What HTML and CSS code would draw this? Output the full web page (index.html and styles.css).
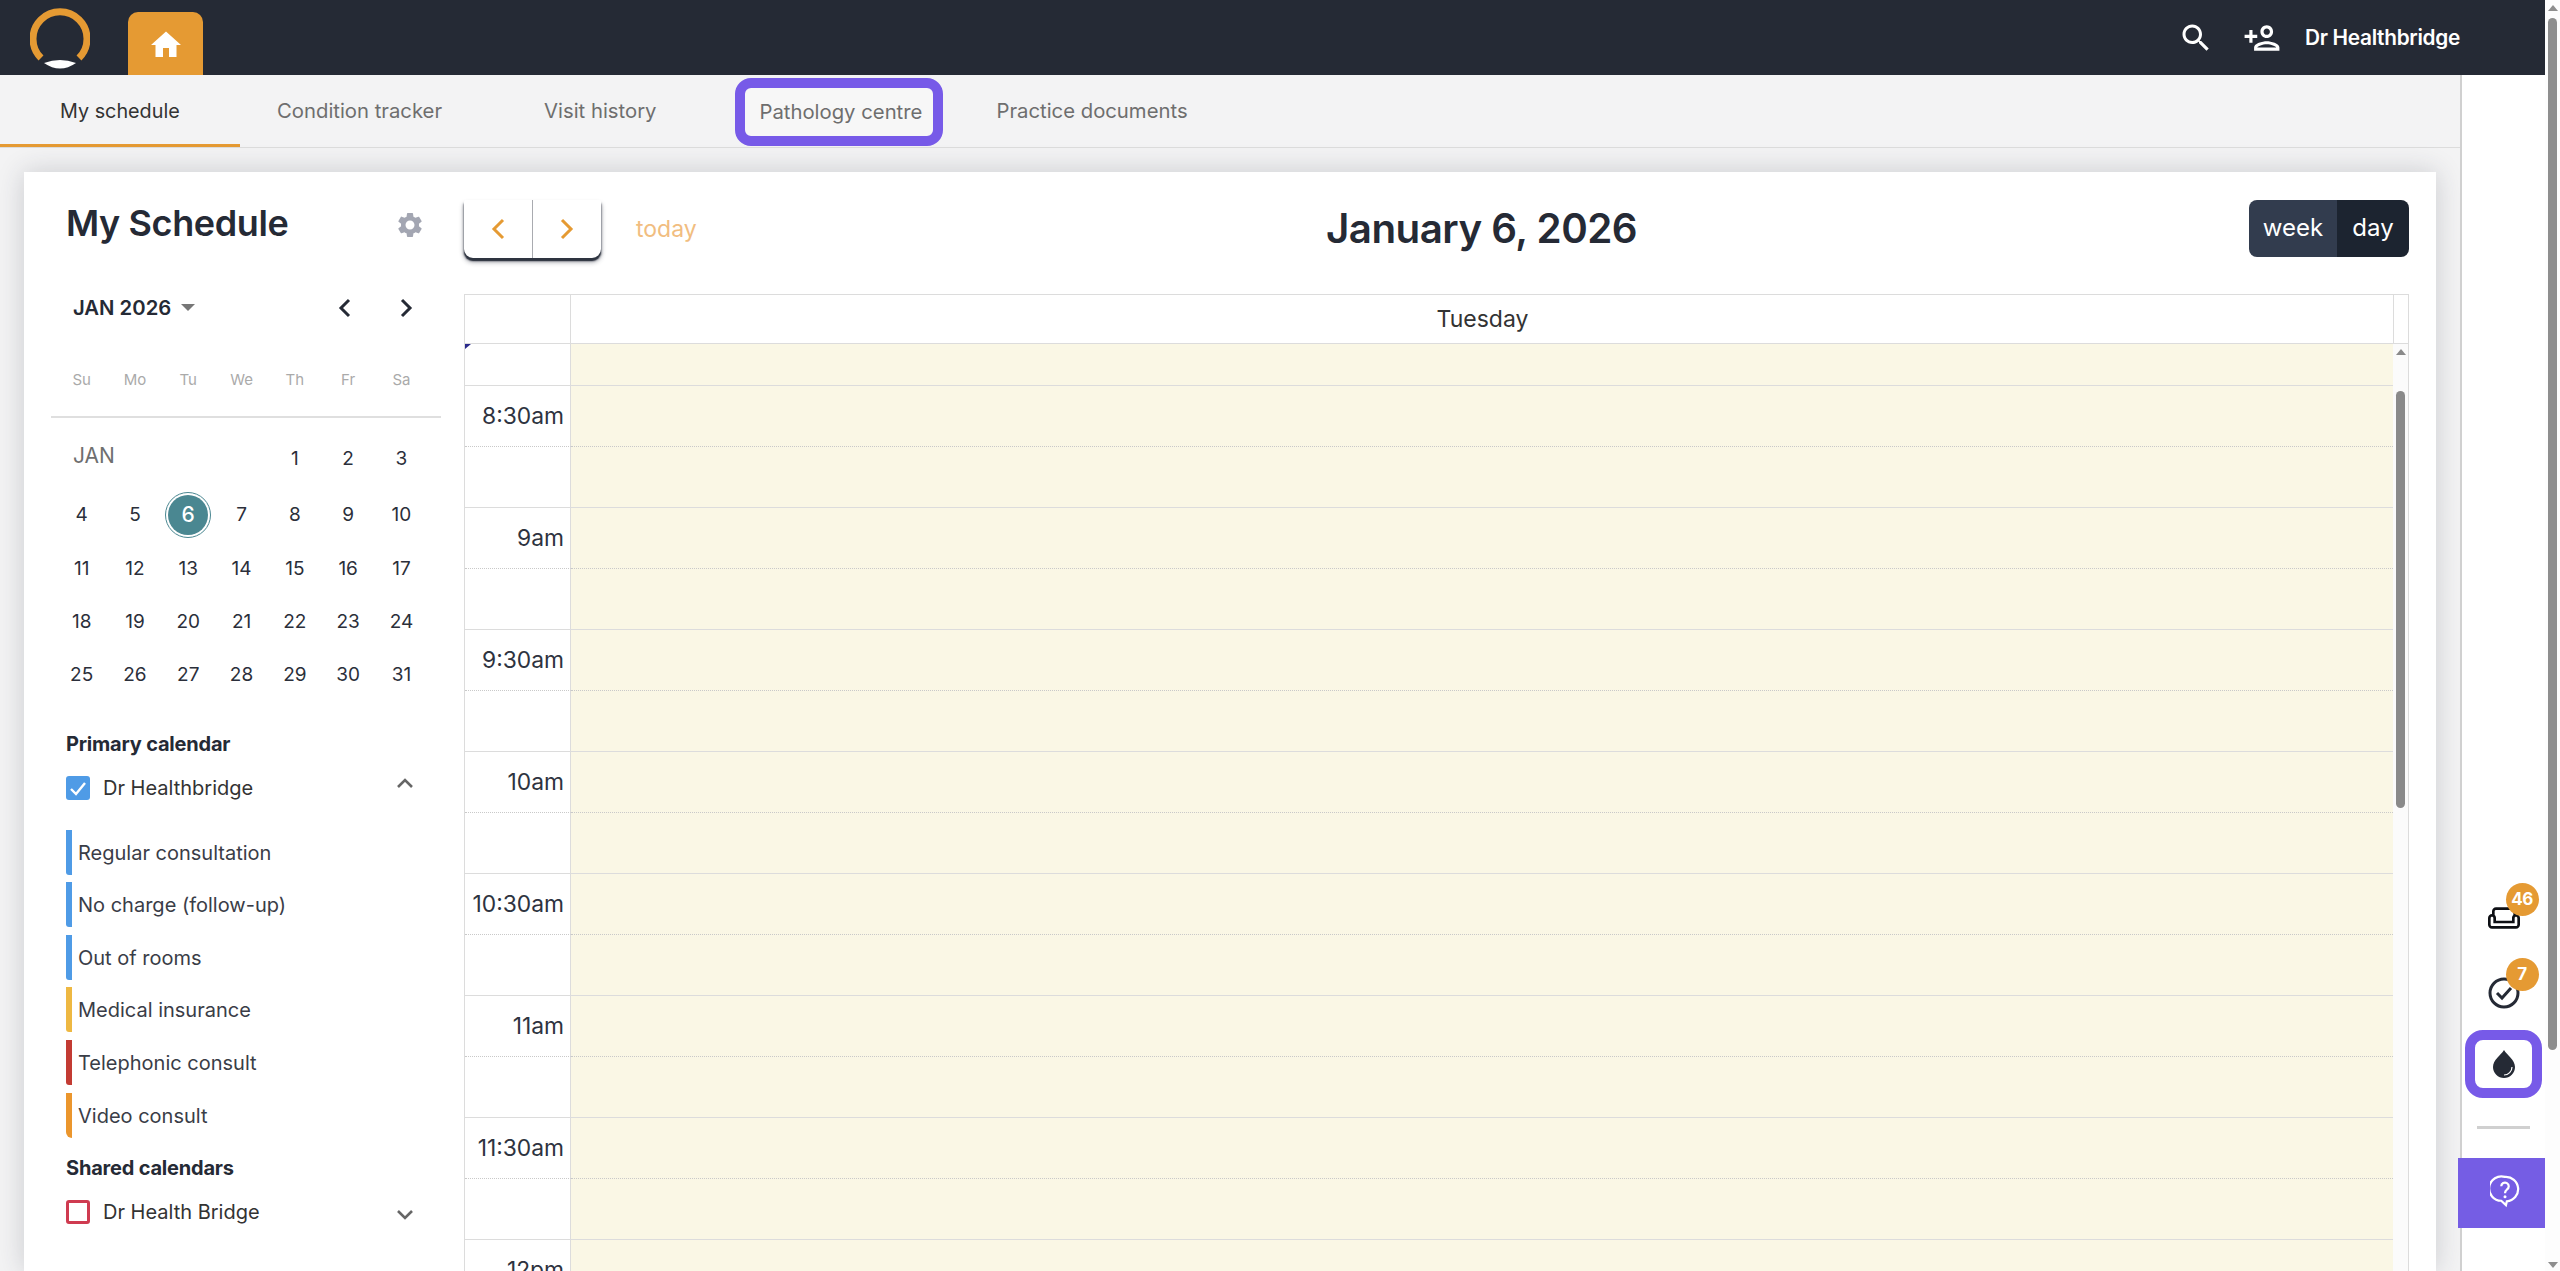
FILE: index.html
```html
<!DOCTYPE html>
<html lang="en">
<head>
<meta charset="utf-8">
<title>My Schedule</title>
<link rel="stylesheet" href="styles.css">
</head>
<body>
<div class="app">
  <div class="window">
    <header class="topbar">
      <div class="brand">
        <svg class="logo" viewBox="0 0 60 62"><path d="M11 51 A27 27 0 1 1 49 51" transform="translate(0 -1)" fill="none" stroke="#e59a33" stroke-width="7"/><path d="M14 55 Q30 49 46 55 Q30 66 14 55Z" fill="#fff"/></svg>
        <a class="home-tab"><svg viewBox="0 0 24 24" class="home-icon"><path d="M10 20v-6h4v6h5v-8h3L12 3 2 12h3v8z"/></svg></a>
      </div>
      <div class="user">
        <svg class="ic-search" viewBox="0 0 24 24"><path d="M15.5 14h-.79l-.28-.27C15.41 12.59 16 11.11 16 9.5 16 5.91 13.09 3 9.5 3S3 5.91 3 9.5 5.91 16 9.5 16c1.61 0 3.09-.59 4.23-1.57l.27.28v.79l5 4.99L20.49 19l-4.99-5zm-6 0C7.01 14 5 11.99 5 9.5S7.01 5 9.5 5 14 7.01 14 9.5 11.99 14 9.5 14z"/></svg>
        <svg class="ic-add" viewBox="0 0 24 24"><path d="M15 12c2.21 0 4-1.79 4-4s-1.79-4-4-4-4 1.79-4 4 1.79 4 4 4zm0-6c1.1 0 2 .9 2 2s-.9 2-2 2-2-.9-2-2 .9-2 2-2zm0 8c-2.67 0-8 1.34-8 4v2h16v-2c0-2.66-5.33-4-8-4zm-6 4c.22-.72 3.31-2 6-2 2.7 0 5.8 1.29 6 2H9zm-3-3v-3h3v-2H6V7H4v3H1v2h3v3h2z"/></svg>
        <span class="user-name">Dr Healthbridge</span>
      </div>
    </header>
    <div class="below">
      <main class="main">
        <nav class="tabs">
          <a class="tab tab-active">My schedule</a>
          <a class="tab tab-cond">Condition tracker</a>
          <a class="tab tab-visit">Visit history</a>
          <a class="tab tab-marked">Pathology centre</a>
          <a class="tab tab-docs">Practice documents</a>
        </nav>
        <section class="card">
          <aside class="side">
            <div class="side-head">
              <h1>My Schedule</h1>
              <svg class="gear" viewBox="0 0 24 24"><path d="M19.14 12.94c.04-.3.06-.61.06-.94 0-.32-.02-.64-.07-.94l2.03-1.58c.18-.14.23-.41.12-.61l-1.92-3.32c-.12-.22-.37-.29-.59-.22l-2.39.96c-.5-.38-1.03-.7-1.62-.94l-.36-2.54c-.04-.24-.24-.41-.48-.41h-3.84c-.24 0-.43.17-.47.41l-.36 2.54c-.59.24-1.13.57-1.62.94l-2.39-.96c-.22-.08-.47 0-.59.22L2.74 8.87c-.12.21-.08.47.12.61l2.03 1.58c-.05.3-.09.63-.09.94s.02.64.07.94l-2.03 1.58c-.18.14-.23.41-.12.61l1.92 3.32c.12.22.37.29.59.22l2.39-.96c.5.38 1.03.7 1.62.94l.36 2.54c.05.24.24.41.48.41h3.84c.24 0 .44-.17.47-.41l.36-2.54c.59-.24 1.13-.56 1.62-.94l2.39.96c.22.08.47 0 .59-.22l1.92-3.32c.12-.22.07-.47-.12-.61l-2.01-1.58zM12 15.6c-1.98 0-3.6-1.62-3.6-3.6s1.62-3.6 3.6-3.6 3.6 1.62 3.6 3.6-1.62 3.6-3.6 3.6z"/></svg>
            </div>
            <div class="month-head">
              <span class="month-label">JAN 2026</span><i class="caret"></i>
              <svg class="mchev mchev-l" viewBox="0 0 14 22"><path d="M11 3 L3 11 L11 19" /></svg>
              <svg class="mchev" viewBox="0 0 14 22"><path d="M3 3 L11 11 L3 19" /></svg>
            </div>
            <div class="dow"><span>Su</span><span>Mo</span><span>Tu</span><span>We</span><span>Th</span><span>Fr</span><span>Sa</span></div>
            <div class="days">
              <div class="week week-first"><span class="jan">JAN</span><span>1</span><span>2</span><span>3</span></div>
              <div class="week"><span>4</span><span>5</span><span class="today"><b>6</b></span><span>7</span><span>8</span><span>9</span><span>10</span></div>
              <div class="week"><span>11</span><span>12</span><span>13</span><span>14</span><span>15</span><span>16</span><span>17</span></div>
              <div class="week"><span>18</span><span>19</span><span>20</span><span>21</span><span>22</span><span>23</span><span>24</span></div>
              <div class="week"><span>25</span><span>26</span><span>27</span><span>28</span><span>29</span><span>30</span><span>31</span></div>
            </div>
            <h2 class="cal-title">Primary calendar</h2>
            <div class="cal-row">
              <i class="check check-on"><svg viewBox="0 0 24 24"><path d="M5 13 L10 18 L19 7"/></svg></i>
              <span>Dr Healthbridge</span>
              <svg class="fold fold-up" viewBox="0 0 18 12"><path d="M2 10 L9 3 L16 10"/></svg>
            </div>
            <ul class="types">
              <li class="t-blue">Regular consultation</li>
              <li class="t-blue">No charge (follow-up)</li>
              <li class="t-blue">Out of rooms</li>
              <li class="t-yellow">Medical insurance</li>
              <li class="t-red">Telephonic consult</li>
              <li class="t-orange">Video consult</li>
            </ul>
            <h2 class="cal-title cal-title-shared">Shared calendars</h2>
            <div class="cal-row cal-row-shared">
              <i class="check check-off"></i>
              <span>Dr Health Bridge</span>
              <svg class="fold fold-down" viewBox="0 0 18 12"><path d="M2 2 L9 9 L16 2"/></svg>
            </div>
          </aside>
          <div class="cal">
            <div class="toolbar">
              <div class="tool-left">
                <div class="arrows">
                  <button class="arrow"><svg viewBox="0 0 14 22"><path d="M12 2 L3 11 L12 20"/></svg></button>
                  <button class="arrow"><svg viewBox="0 0 14 22"><path d="M2 2 L11 11 L2 20"/></svg></button>
                </div>
                <span class="today-btn">today</span>
              </div>
              <h2 class="date">January 6, 2026</h2>
              <div class="views"><span class="v-week">week</span><span class="v-day">day</span></div>
            </div>
            <div class="grid">
              <div class="grid-head">
                <div class="axis-h"></div>
                <div class="day-h">Tuesday</div>
                <div class="scroll-h"></div>
              </div>
              <div class="grid-body">
                <div class="slots">
                  <div class="slot slot-partial"><i class="now"></i><div class="tl"></div><div class="tc"></div></div>
                  <div class="slot"><div class="tl">8:30am</div><div class="tc"></div><div class="tl half"></div><div class="tc half"></div></div>
                  <div class="slot"><div class="tl">9am</div><div class="tc"></div><div class="tl half"></div><div class="tc half"></div></div>
                  <div class="slot"><div class="tl">9:30am</div><div class="tc"></div><div class="tl half"></div><div class="tc half"></div></div>
                  <div class="slot"><div class="tl">10am</div><div class="tc"></div><div class="tl half"></div><div class="tc half"></div></div>
                  <div class="slot"><div class="tl">10:30am</div><div class="tc"></div><div class="tl half"></div><div class="tc half"></div></div>
                  <div class="slot"><div class="tl">11am</div><div class="tc"></div><div class="tl half"></div><div class="tc half"></div></div>
                  <div class="slot"><div class="tl">11:30am</div><div class="tc"></div><div class="tl half"></div><div class="tc half"></div></div>
                  <div class="slot"><div class="tl">12pm</div><div class="tc"></div><div class="tl half"></div><div class="tc half"></div></div>
                </div>
                <div class="inner-scroll"><i class="up-mini"></i><i class="thumb-mini"></i></div>
              </div>
            </div>
          </div>
        </section>
      </main>
      <aside class="rail">
        <div class="rail-item">
          <svg class="rail-icon" viewBox="0 0 24 24"><path d="M21 9V7c0-1.65-1.35-3-3-3H6C4.35 4 3 5.35 3 7v2c-1.65 0-3 1.35-3 3v5c0 1.65 1.35 3 3 3h18c1.65 0 3-1.35 3-3v-5c0-1.65-1.35-3-3-3zM5 7c0-.55.45-1 1-1h12c.55 0 1 .45 1 1v2.78c-.61.55-1 1.34-1 2.22v2H6v-2c0-.88-.39-1.67-1-2.22V7zm17 10c0 .55-.45 1-1 1H3c-.55 0-1-.45-1-1v-5c0-.55.45-1 1-1s1 .45 1 1v4h16v-4c0-.55.45-1 1-1s1 .45 1 1v5z"/></svg>
          <span class="badge">46</span>
        </div>
        <div class="rail-item">
          <svg class="rail-icon" viewBox="0 0 32 32"><circle cx="16" cy="16" r="14" fill="none" stroke="#252a35" stroke-width="3"/><path d="M9 16 L14 21 L23 11" fill="none" stroke="#252a35" stroke-width="3"/></svg>
          <span class="badge">7</span>
        </div>
        <div class="rail-marked">
          <svg class="drop" viewBox="0 0 24 30"><path d="M12 1 C9 6 1 11 1 18 A11 11 0 0 0 23 18 C23 11 15 6 12 1Z" fill="#252a35"/><path d="M20 18 A8 8 0 0 1 12 26" fill="none" stroke="#fff" stroke-width="1.2"/></svg>
        </div>
        <div class="rail-line"></div>
        <a class="help">
          <svg viewBox="0 0 32 36"><path d="M16 3 A13 13 0 1 0 12 28.4 L17 33 L18 29 A13 13 0 0 0 16 3Z" fill="none" stroke="#fff" stroke-width="2.4"/><path d="M12 13 A4 4 0 1 1 18 16.5 C16.5 17.5 16 18 16 20.5" fill="none" stroke="#fff" stroke-width="2.4"/><circle cx="16" cy="24" r="1.6" fill="#fff"/></svg>
        </a>
      </aside>
    </div>
  </div>
  <div class="page-scroll">
    <i class="sb-up"></i>
    <i class="sb-thumb"></i>
    <i class="sb-down"></i>
  </div>
</div>
</body>
</html>
```
FILE: styles.css
```css
* { box-sizing: border-box; }
html, body { margin: 0; height: 100%; overflow: hidden; }
body { font-family: Inter, "Noto Sans", sans-serif; color: #252a35; background: #fff; }
h1, h2, ul { margin: 0; padding: 0; }
ul { list-style: none; }
i { display: block; font-style: normal; }

.app { display: flex; height: 100vh; width: 100%; }
.window { flex: 1; min-width: 0; display: flex; flex-direction: column; height: 100%; }

.topbar { flex: none; height: 75px; background: #252a35; display: flex; justify-content: space-between; }
.brand { display: flex; padding-left: 30px; }
.logo { width: 60px; height: 62px; margin-top: 8px; }
.home-tab { width: 75px; height: 63px; margin: 12px 0 0 38px; background: #e59a33; border-radius: 10px 10px 0 0; display: flex; align-items: center; justify-content: center; }
.home-icon { width: 36px; height: 36px; fill: #fff; margin-top: 2px; }
.user { display: flex; align-items: center; padding-right: 85px; color: #fff; }
.ic-search { width: 36px; height: 36px; fill: #fff; }
.ic-add { width: 38px; height: 38px; fill: #fff; margin-left: 29px; }
.user-name { font-size: 20.8px; font-weight: 600; margin-left: 24px; letter-spacing: -0.3px; }

.below { flex: 1; min-height: 0; display: flex; }
.main { flex: 1; min-width: 0; background: #f3f3f4; border-right: 2px solid #d0d0d0; overflow: hidden; display: flex; flex-direction: column; }

.tabs { flex: none; height: 73px; display: flex; border-bottom: 1px solid #dcdcdc; padding-top: 3px; }
.tab { height: 69px; display: flex; align-items: center; font-size: 20.3px; color: #6e6e6e; padding: 0 0 4px 0; white-space: nowrap; }
.tab-active { color: #333; width: 240px; padding: 0 0 0 60px; font-size: 19.8px; border-bottom: 3px solid #e59a33; }
.tab-cond { padding-left: 37px; padding-right: 102px; }
.tab-visit { padding-right: 79px; }
.tab-marked { width: 208px; height: 68px; border: 10px solid #775ae8; border-radius: 16px; padding: 0 0 1px 14px; margin-right: 53px; background: #f7f7f7; }

.card { margin: 24px 24px 0 24px; flex: 1; min-height: 0; background: #fff; box-shadow: 0 0 26px rgba(40, 44, 60, .2); display: flex; }

.side { flex: none; width: 440px; padding-left: 27px; height: 1100px; }
.side-head { height: 78px; display: flex; justify-content: space-between; align-items: flex-start; padding: 29px 39px 0 15px; }
h1 { font-size: 36px; font-weight: 600; line-height: 44px; letter-spacing: -0.4px; }
.gear { width: 30px; height: 30px; fill: #a3a6b2; margin-top: 9px; }

.month-head { display: flex; align-items: center; height: 40px; margin-top: 37.5px; padding-left: 22px; }
.month-label { font-size: 20.3px; font-weight: 600; }
.caret { width: 0; height: 0; border: 7px solid transparent; border-top: 7px solid #777; border-bottom: 0; margin-left: 10px; }
.mchev { width: 14px; height: 22px; fill: none; stroke: #252a35; stroke-width: 3; margin-left: 47px; }
.mchev-l { margin-left: auto; }
.month-head .mchev:last-child { margin-right: 51px; }

.dow { display: grid; grid-template-columns: repeat(7, 53.3px); margin-top: 43.5px; margin-left: 4px; height: 44.5px; font-size: 15px; color: #aaa; text-align: center; line-height: 18px; width: 390px; }
.days { width: 390px; border-top: 2px solid #dfdfdf; padding-left: 4px; }
.week { display: grid; grid-template-columns: repeat(7, 53.3px); height: 53.4px; align-items: center; text-align: center; font-size: 19px; color: #2b2f3a; }
.week-first { height: 70.5px; padding-top: 10.5px; }
.week-first .jan { grid-column: 1 / span 4; text-align: left; padding-left: 18px; color: #6f6f6f; font-size: 21px; margin-top: -6px; }
.today { width: 46px; height: 46px; margin: 0 auto; border-radius: 50%; border: 1px solid #4a8791; padding: 2px; display: flex; }
.today b { flex: 1; background: #4a8791; color: #fff; border-radius: 50%; font-weight: 500; font-size: 21px; line-height: 40px; }

.cal-title { font-size: 20px; font-weight: 700; color: #252a35; line-height: 24px; padding-left: 15px; letter-spacing: -0.2px; }
.side > .cal-title { margin-top: 30px; }
.side > .cal-title-shared { margin-top: 18px; }
.cal-row { display: flex; align-items: center; height: 24px; margin-top: 20px; padding-left: 15px; font-size: 20px; line-height: 26px; color: #333; }
.check { width: 24px; height: 24px; border-radius: 3px; margin-right: 13px; }
.check-on { background: #4f9be6; }
.check-on svg { display: block; width: 24px; height: 24px; fill: none; stroke: #fff; stroke-width: 2.4; }
.check-off { border: 3px solid #cf3b50; }
.fold { width: 18px; height: 12px; fill: none; stroke: #666; stroke-width: 2.6; margin-left: auto; margin-right: 50px; }
.fold-up { margin-top: -9px; }
.fold-down { margin-top: 6px; }

.types { margin: 30px 0 0 15px; display: flex; flex-direction: column; gap: 7.6px; }
.types li { height: 45px; border-left: 6px solid #4f9be6; border-radius: 0 0 0 3px; padding-left: 6px; font-size: 20px; line-height: 47px; color: #3a3d47; }
.types .t-blue { border-left-color: #4f9be6; }
.types .t-yellow { border-left-color: #eeb842; }
.types .t-red { border-left-color: #c33b33; }
.types .t-orange { border-left-color: #eb962d; border-radius: 0 0 0 6px; }

.cal { flex: 1; min-width: 0; padding-right: 27px; }
.toolbar { height: 122px; display: flex; align-items: flex-start; padding-top: 28px; }
.tool-left { flex: 1 1 0; display: flex; align-items: center; height: 58px; }
.arrows { display: flex; width: 137px; height: 58px; border-radius: 2px 2px 9px 9px; box-shadow: 0 3px 1px #2e3440, 0 4px 5px rgba(40, 44, 60, .45), -1px 3px 2px rgba(40, 44, 60, .3), 1px 3px 2px rgba(40, 44, 60, .3); background: #fff; }
.arrow { flex: 1; border: 0; background: transparent; padding: 0; display: flex; align-items: center; justify-content: center; }
.arrow + .arrow { border-left: 1px solid #a9abb0; }
.arrow svg { width: 14px; height: 22px; fill: none; stroke: #e59a33; stroke-width: 3; }
.today-btn { margin-left: 35px; color: #f1bd80; font-size: 23px; }
.date { flex: none; font-size: 40.3px; font-weight: 600; line-height: 58px; letter-spacing: -0.5px; margin: 0 0 0 90px; }
.views { flex: 1 1 0; display: flex; justify-content: flex-end; height: 57px; font-size: 24px; line-height: 56px; color: #fff; }
.v-week { background: #323c4e; width: 88px; text-align: center; border-radius: 8px 0 0 8px; }
.v-day { background: #1c2430; width: 72px; text-align: center; border-radius: 0 8px 8px 0; }

.grid { border: 1px solid #dcdcdc; border-bottom: 0; }
.grid-head { display: flex; height: 49px; border-bottom: 1px solid #dcdcdc; }
.axis-h { width: 106px; border-right: 1px solid #dcdcdc; }
.day-h { flex: 1; text-align: center; font-size: 23px; line-height: 48px; color: #333; padding-left: 1px; }
.scroll-h { width: 15px; border-left: 1px solid #dcdcdc; }
.grid-body { display: flex; }
.slots { flex: 1; min-width: 0; position: relative; }
.slot { display: grid; grid-template-columns: 106px 1fr; grid-template-rows: 60px 61px; border-bottom: 1px solid #dcdcdc; }
.slot:last-child { border-bottom: 0; }
.slot-partial { grid-template-rows: 41px; position: relative; }
.tl { border-right: 1px solid #dcdcdc; text-align: right; padding-right: 6px; font-size: 22.8px; line-height: 60px; color: #2e3340; white-space: nowrap; }
.tc { background: #faf7e5; }
.half { border-top: 1px dotted #c9c9c9; }
.now { position: absolute; left: 0; top: 0; width: 0; height: 0; border-top: 5px solid #2a2a8c; border-right: 6px solid transparent; }
.inner-scroll { flex: none; width: 15px; background: #fbfbfb; display: flex; flex-direction: column; align-items: center; padding-top: 5px; }
.up-mini { width: 0; height: 0; border: 5px solid transparent; border-bottom: 6px solid #8a8a8a; border-top: 0; }
.thumb-mini { width: 9px; height: 417px; margin-top: 36px; background: #8a8a8a; border-radius: 5px; }

.rail { flex: none; width: 83px; background: #fff; display: flex; flex-direction: column; align-items: center; position: relative; padding-top: 827px; }
.rail-item { width: 40px; height: 32px; position: relative; margin-bottom: 43px; }
.rail-icon { display: block; width: 32px; height: 32px; margin: 0 auto; fill: #0d0f14; }
.badge { position: absolute; left: 22px; top: -19px; width: 33px; height: 33px; border-radius: 50%; background: #e59a33; color: #fff; font-size: 17px; font-weight: 700; line-height: 33px; text-align: center; letter-spacing: -0.4px; }
.rail-marked { width: 77px; height: 68px; border: 10px solid #775ae8; border-radius: 18px; margin-top: -22px; display: flex; align-items: center; justify-content: center; }
.drop { width: 24px; height: 30px; }
.rail-line { width: 53px; height: 3px; background: #d0d0d0; margin-top: 28px; }
.help { position: absolute; top: 1083px; left: -4px; width: 87px; height: 70px; padding-left: 6px; background: #755de4; display: flex; align-items: center; justify-content: center; }
.help svg { width: 30px; height: 34px; margin-top: -4px; }

.page-scroll { flex: none; width: 15px; background: #fdfdfd; display: flex; flex-direction: column; align-items: center; padding-top: 4px; }
.sb-up { width: 0; height: 0; border: 5px solid transparent; border-bottom: 6px solid #8e8e8e; border-top: 0; margin-top: 1px; }
.sb-thumb { width: 9px; height: 1032px; margin-top: 7px; background: #8e8e8e; border-radius: 5px; }
.sb-down { width: 0; height: 0; border: 5px solid transparent; border-top: 6px solid #8e8e8e; border-bottom: 0; margin-top: auto; margin-bottom: 3px; }
```
